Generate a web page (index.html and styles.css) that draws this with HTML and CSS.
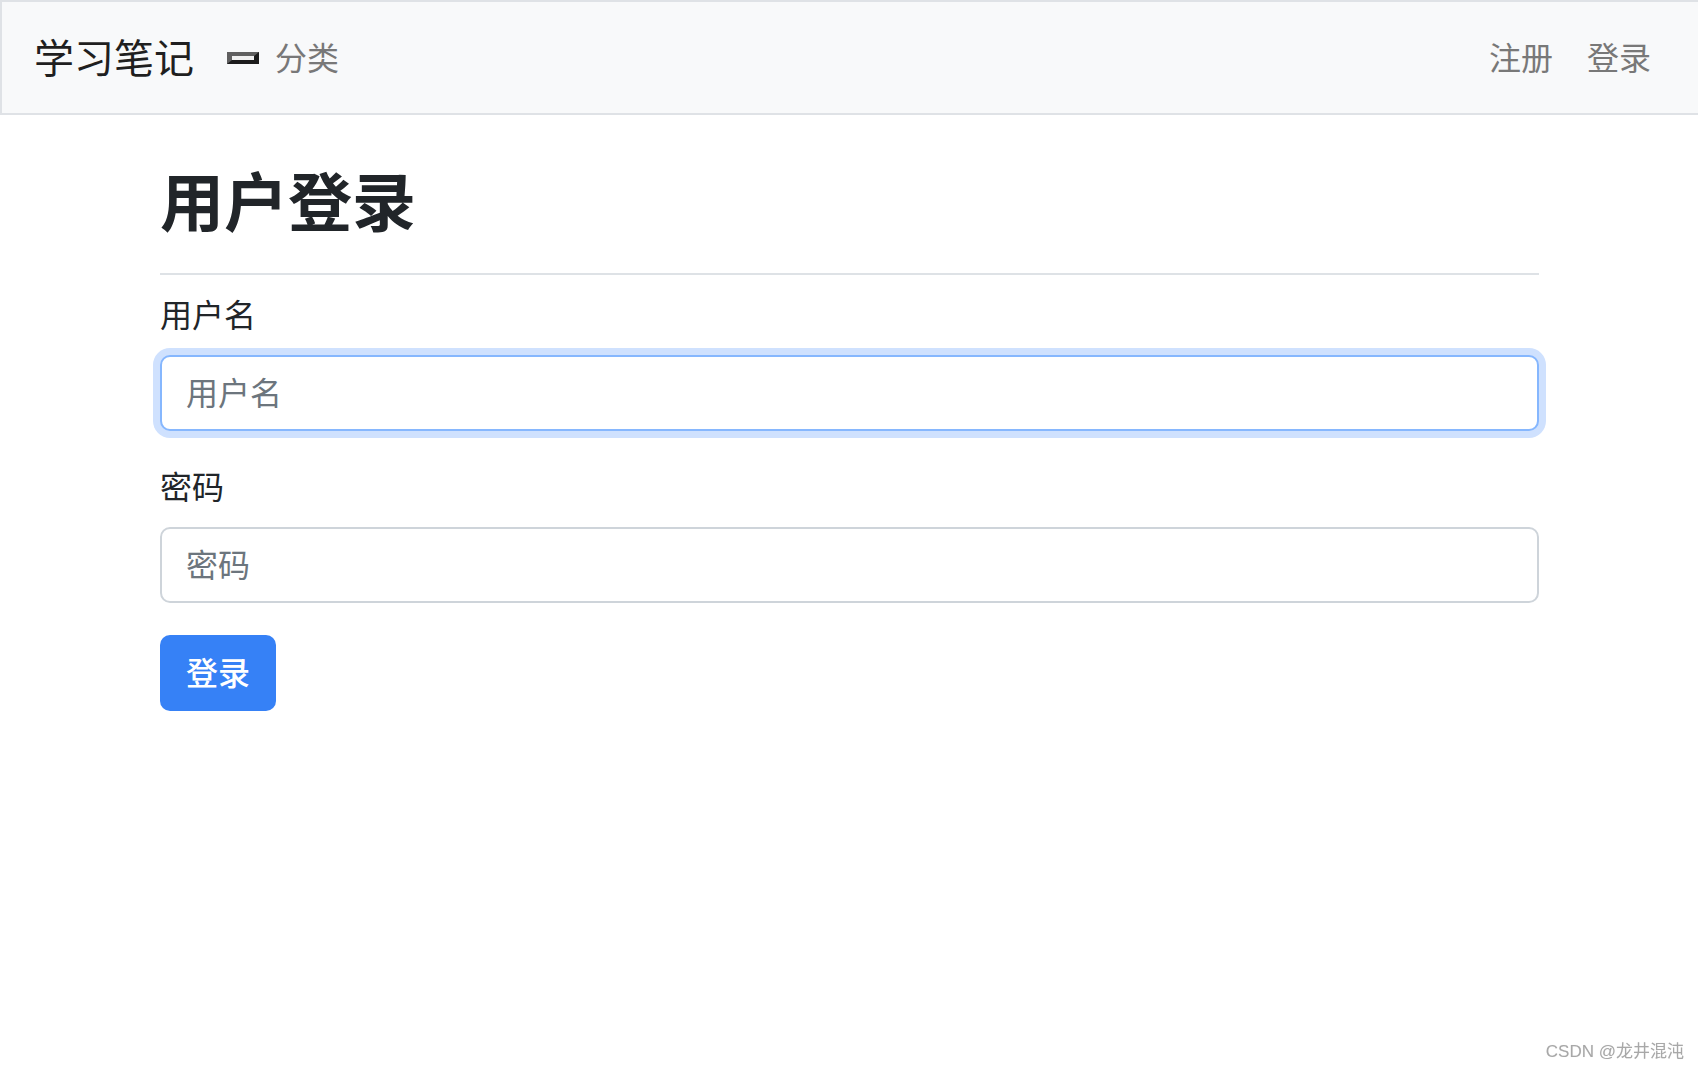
FILE: index.html
```html
<!DOCTYPE html>
<html lang="zh-CN">
<head>
<meta charset="utf-8">
<title>用户登录 - 学习笔记</title>
<link rel="stylesheet" href="styles.css">
</head>
<body>
<nav class="navbar">
  <div class="nav-left">
    <a class="brand" href="#">学习笔记</a>
    <span class="brand-icon"></span>
    <a class="nav-link" href="#">分类</a>
  </div>
  <div class="nav-right">
    <a class="nav-link" href="#">注册</a>
    <a class="nav-link" href="#">登录</a>
  </div>
</nav>
<main class="container">
  <h1 class="title">用户登录</h1>
  <hr class="divider">
  <form class="login-form">
    <label class="form-label" for="username">用户名</label>
    <input class="form-input focused" id="username" type="text" placeholder="用户名">
    <label class="form-label" for="password">密码</label>
    <input class="form-input" id="password" type="password" placeholder="密码">
    <button class="btn-primary" type="button">登录</button>
  </form>
</main>
<div class="watermark">CSDN @龙井混沌</div>
</body>
</html>
```
FILE: styles.css
```css
* { box-sizing: border-box; }
html, body {
  margin: 0;
  padding: 0;
  background: #ffffff;
  font-family: "Noto Sans CJK SC", "Noto Sans", sans-serif;
  color: #212529;
}
.navbar {
  height: 115px;
  background: #f8f9fa;
  border-top: 2px solid #dfe2e6;
  border-left: 2px solid #dfe2e6;
  border-bottom: 2px solid #dfe2e6;
  display: flex;
  align-items: center;
  justify-content: space-between;
  padding: 0 30px 4px 32px;
}
.nav-left, .nav-right {
  display: flex;
  align-items: center;
}
.brand {
  font-size: 40px;
  line-height: 1.2;
  color: #1f1f1f;
  text-decoration: none;
  margin-right: 33px;
}
.brand-icon {
  display: inline-block;
  width: 32px;
  height: 12px;
  background: #f0f0f0;
  border-style: solid;
  border-width: 4px 5px 4px 5px;
  border-color: #5f5f5f #1c1c1c #1c1c1c #5f5f5f;
  margin-right: 16px;
  margin-top: 4px;
}
.nav-link {
  font-size: 32px;
  line-height: 1.5;
  color: #787878;
  text-decoration: none;
}
.nav-right .nav-link {
  padding: 0 17px;
}
.container {
  width: 1380px;
  margin: 0 auto;
  padding-left: 1px;
}
.title {
  font-size: 64px;
  font-weight: 700;
  line-height: 1.2;
  margin: 45px 0 36px 0;
  color: #212529;
}
.divider {
  border: 0;
  border-top: 2px solid #dee2e6;
  margin: 0 0 14px 0;
}
.login-form {
  display: flex;
  flex-direction: column;
  align-items: flex-start;
}
.form-label {
  font-size: 32px;
  line-height: 1.5;
  margin-bottom: 18px;
  color: #212529;
}
.form-input {
  width: 100%;
  height: 76px;
  border: 2px solid #ced4da;
  border-radius: 10px;
  padding: 0 24px 4px 24px;
  font-family: "Noto Sans CJK SC", "Noto Sans", sans-serif;
  font-size: 32px;
  color: #212529;
  background: #ffffff;
  margin-bottom: 30px;
  outline: none;
}
.form-input::placeholder {
  color: #6c757d;
}
.form-input.focused {
  border-color: #86b7fe;
  box-shadow: 0 0 0 7px #cfe1fe;
}
.btn-primary {
  margin-top: 2px;
  height: 76px;
  padding: 0 26px 4px 26px;
  border: 0;
  border-radius: 10px;
  background: #3681f6;
  color: #ffffff;
  font-family: "Noto Sans CJK SC", "Noto Sans", sans-serif;
  font-size: 32px;
  font-weight: 500;
  cursor: pointer;
}
.watermark {
  position: fixed;
  right: 14px;
  bottom: 8px;
  font-family: "Liberation Sans", "Noto Sans CJK SC", sans-serif;
  font-size: 17px;
  color: #a8a8a8;
  text-shadow: 0 0 1px #e6e6e6;
}
```
